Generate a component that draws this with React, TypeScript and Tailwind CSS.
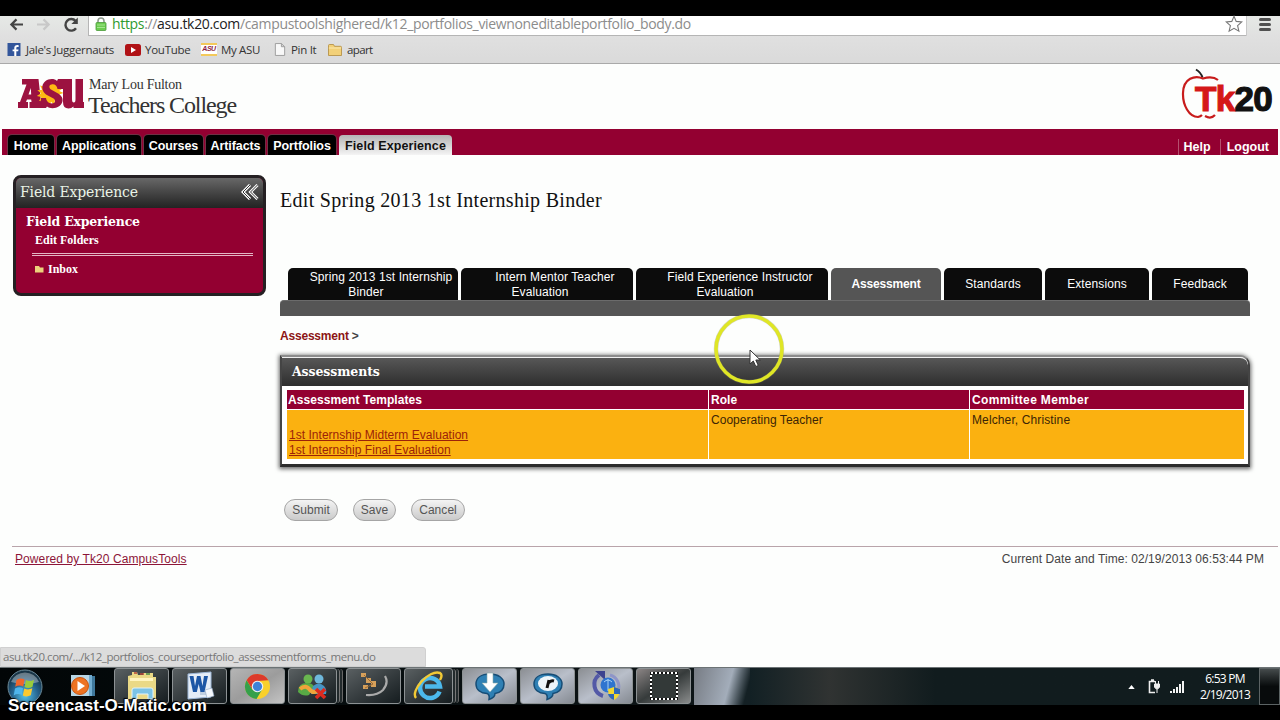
import React from 'react';

const SANS = "font-['Liberation_Sans',Arial,sans-serif]";
const UI = "font-['Open_Sans','Noto_Sans',sans-serif]";

function BackIcon({ className }: { className: string }) {
  return (
    <svg viewBox="0 0 16 14" className={className} fill="none" stroke="currentColor" strokeWidth="2.4">
      <path d="M15 7H3M8 1.5 2.5 7 8 12.5" />
    </svg>
  );
}

function Toolbar() {
  return (
    <div className="flex h-5 items-stretch bg-linear-to-b from-[#e6e9e6] to-[#e0e0e0]">
      <div className="flex w-[88px] items-center pb-[3px] pl-[9px]">
        <BackIcon className="h-[13px] w-[15px] text-[#444]" />
        <BackIcon className="ml-3 h-[13px] w-[15px] -scale-x-100 text-[#c8c8c8]" />
        <svg viewBox="0 0 16 16" className="ml-[12px] h-[16px] w-[16px]" fill="none" stroke="#444" strokeWidth="2.4">
          <path d="M13 11.2A5.8 5.8 0 1 1 12.6 4" />
          <path d="M14.8.6V7H8.4z" fill="#444" stroke="none" />
        </svg>
      </div>
      <div className="flex flex-1 items-center border-b border-l border-[#b5b5b5] bg-white pb-[3px] pl-[6px]">
        <svg viewBox="0 0 12 14" className="h-[14px] w-[12px]">
          <path d="M3 7V4a3 3 0 0 1 6 0v3" fill="none" stroke="#8f9a8f" strokeWidth="1.6" />
          <rect x="1" y="5.5" width="10" height="8" rx="1" fill="#6ccc50" stroke="#4a9a3a" strokeWidth=".8" />
          <path d="M2 8h8M2 10.5h8" stroke="#b4ecA0" strokeWidth=".8" />
        </svg>
        <span className="ml-[5px] text-[14px] leading-5 tracking-[-0.335px] whitespace-nowrap text-[#8c8c8c]">
          <span className="text-[#2e9a2e]">https</span>://<span className="text-[#222]">asu.tk20.com</span>
          /campustoolshighered/k12_portfolios_viewnoneditableportfolio_body.do
        </span>
        <svg viewBox="0 0 18 18" className="mr-[3px] ml-auto h-[18px] w-[18px]" fill="#fff" stroke="#777" strokeWidth="1.1">
          <path d="m9 1.3 2.2 5.1 5.6.5-4.2 3.7 1.3 5.6L9 13.3l-4.9 2.9 1.3-5.6L1.200 6.900l5.600-.5z" />
        </svg>
      </div>
      <div className="flex w-[34px] flex-col gap-[2px] border-l border-[#c8c8c8] pt-[2px] pl-[12px]">
        <div className="h-[3px] w-3 rounded-sm bg-[#505050]" />
        <div className="h-[3px] w-3 rounded-sm bg-[#505050]" />
        <div className="h-[3px] w-3 rounded-sm bg-[#505050]" />
      </div>
    </div>
  );
}

function Bookmarks() {
  return (
    <div className="flex h-7 items-center border-b border-[#a9a9a9] bg-linear-to-b from-[#e0e0e0] to-[#dadada] pl-[7px] text-[11.5px] whitespace-nowrap text-[#333]">
      <svg viewBox="0 0 14 14" className="h-[13px] w-[14px]">
        <rect width="14" height="14" fill="#33569b" />
        <path d="M9.500 14V9h2l.4-2H9.500V5.500c0-.8.3-1.200 1.300-1.200H12V2.300C9 1.800 7.300 3 7.300 5.200V7H5.500v2h1.800v5z" fill="#fff" />
      </svg>
      <span className="ml-[5px] w-[90px] tracking-[-0.32px]">Jale's Juggernauts</span>
      <svg viewBox="0 0 16 12" className="ml-[9px] h-[12px] w-[16px]">
        <rect width="16" height="12" rx="2.500" fill="#b01216" />
        <path d="M6 3v6l5-3z" fill="#fff" />
      </svg>
      <span className="ml-[4px] w-[46px] tracking-[-0.25px]">YouTube</span>
      <span className={`ml-[10px] flex h-[13px] w-4 items-center justify-center border-y-2 border-[#f3c95b] bg-white text-[7px] font-bold tracking-[-0.5px] text-[#8c1d40] italic ${SANS}`}>ASU</span>
      <span className="ml-[4px] w-[40px] tracking-[-0.35px]">My ASU</span>
      <svg viewBox="0 0 12 14" className="ml-[13px] h-[13px] w-[12px]" fill="#f8f8f8" stroke="#999">
        <path d="M1 .6h6.500L11 4v9.400H1zM7.500.6V4H11" />
      </svg>
      <span className="ml-[5px] w-[26px] tracking-[-0.3px]">Pin It</span>
      <svg viewBox="0 0 14 12" className="ml-[11px] h-[12px] w-[14px]" fill="#f2d078" stroke="#b08a3c" strokeWidth=".8">
        <path d="M.500 11.500v-10q0-1 1-1h4l1 1.800h6q1 0 1 1v8.200z" />
        <path d="M.8 4h12.400" stroke="#fff0bb" />
      </svg>
      <span className="ml-[5px] tracking-[-0.6px]">apart</span>
    </div>
  );
}

function Brand() {
  return (
    <div className="flex h-[65px] justify-between pr-[7px] pl-[17px]">
      <div className="flex">
        <svg viewBox="0 0 70 32" className="mt-[14px] h-[32px] w-[70px]">
          <path
            fill="#9c1240"
            fillRule="evenodd"
            d="M5 1H21.500L24 24H25V30H12.500V24H14.500L14.200 21.500H10L9 24H11V30H1V24H3L9.500 6.500H5zM13.800 10 11.500 16.500H14.200z"
          />
          <path d="m33 1 1.800 4 4-2.700-.3 4.500 4.600-1.400-2 4.200 4.700.3-3.600 3 4.300 2-4.500 1.600 3.200 3.400-4.800-.2 1.700 4.500-4.300-2-.2 4.700-3.500-3.200-2 4.300-1.800-4.300-3.800 2.900.1-4.700-4.600 1.200 2.400-4.200-4.600-1 4.200-2.600-3.700-3 4.800-.5-2-4.400 4.600 1.300-.1-4.700 4 2.700z" fill="#fdb913" />
          <path d="M46 1V11H40.500C40 7.500 37.500 5.800 34.500 6.500 31.500 7.200 32 10 34 11.500L42 16C47 19.500 46.500 25 42.500 28 38 31 32.500 30.500 30 28.500L29 30H24V20H29C29.500 24 33 26 36 25.300 39 24.500 38.500 21.800 36.500 20.500L29 16.500C24.500 13 24 7 28 3.500 32 .3 37.500.5 40 3L41 1z" fill="#9c1240" />
          <path d="M45 1H55V21q0 3.500 1.800 3.500t1.700-3.500V1H66V24h1v6H56.500v-1.500Q54.500 30.500 51.500 30.500 46 30.500 46 24V6H45z" fill="#9c1240" />
        </svg>
        <div className="mt-[13px] ml-[1px] font-['Liberation_Serif','Times_New_Roman',serif] whitespace-nowrap text-[#333]">
          <div className="h-[15px] pl-[1px] text-[14px] leading-[15px] tracking-[-0.25px]">Mary Lou Fulton</div>
          <div className="pt-[2px] text-[24px] leading-[22px] tracking-[-1.1px]">Teachers College</div>
        </div>
      </div>
      <div className="relative mt-[4px] h-[52px] w-[92px]">
        <svg viewBox="0 0 92 52" className="absolute inset-0 h-[52px] w-[92px]" fill="none">
          <path d="M15 1.500q5 3 6.500 8" stroke="#222" strokeWidth="2" />
          <path d="M37 12C32 8 27 9 22 10.500 14 7 2.500 10 2 25 1.600 37 8 49 17 49q2.500-.5 4-2M24 48q6 3.500 10-1" stroke="#c81c1c" strokeWidth="2.200" />
        </svg>
        <div className="absolute top-[14px] left-[14px] font-['Liberation_Sans',Arial,sans-serif] text-[35px] leading-[34px] font-bold whitespace-nowrap">
          <div className="origin-left scale-x-[1] tracking-[-0.7px] text-[#111] [-webkit-text-stroke:1.2px_currentColor]">
            <span className="text-[#d51818]">Tk</span>20
          </div>
        </div>
      </div>
    </div>
  );
}

const navTabs = [
  { label: 'Home', cls: 'w-[46px]' },
  { label: 'Applications', cls: 'w-[84px]' },
  { label: 'Courses', cls: 'w-[59px]' },
  { label: 'Artifacts', cls: 'w-[59px]' },
  { label: 'Portfolios', cls: 'w-[68px]' },
];

function Nav() {
  return (
    <div className="mx-[2px] flex h-[26px] items-end gap-[3px] overflow-hidden bg-[#930031] pl-[6px] text-[12.5px] font-bold whitespace-nowrap text-white">
      {navTabs.map((t) => (
        <div key={t.label} className={`flex h-5 items-center justify-center rounded-t-[4px] bg-black pt-[2px] tracking-[-0.08px] ring-1 ring-[#6f3044] ${t.cls}`}>
          {t.label}
        </div>
      ))}
      <div className="flex h-5 w-[113px] items-center justify-center rounded-t-[4px] bg-linear-to-b from-[#b5b5b5] to-[#f4f4f4] pt-[2px] tracking-[0.1px] text-[#111]">
        Field Experience
      </div>
      <div className="mr-[9px] ml-auto flex h-4 items-center text-[12.5px]">
        <span className="h-4 border-l border-[#b5506f] pl-[5px] leading-[17px]">Help</span>
        <span className="ml-[9px] h-4 border-l border-[#b5506f] pl-[6px] leading-[17px]">Logout</span>
      </div>
    </div>
  );
}

function Sidebar() {
  return (
    <div className="mt-[20px] ml-[13px] h-[121px] w-[253px] shrink-0 overflow-hidden rounded-[8px] border-[3px] border-[#252023] bg-[#930031] text-white">
      <div className="flex h-[30px] items-center justify-between bg-linear-to-b from-[#686868] to-[#232323] pr-[4px] pl-[4px] pb-[2px]">
        <span className="font-['DejaVu_Serif',serif] text-[14px] tracking-[-0.15px] text-[#e9f3e6]">Field Experience</span>
        <svg viewBox="0 0 18 16" className="h-[16px] w-[18px]" fill="none">
          <path d="M9 1 2 8l7 7M16.500 1l-7 7 7 7" stroke="#fff" strokeWidth="3" />
          <path d="M9 1 2 8l7 7M16.500 1l-7 7 7 7" stroke="#333" strokeWidth="1" />
        </svg>
      </div>
      <div className="font-['Liberation_Serif',serif] font-bold">
        <div className="pt-[5px] pl-[10px] font-['DejaVu_Serif',serif] text-[12.5px] leading-[18px] tracking-[-0.2px]">Field Experience</div>
        <div className="pl-[19px] text-[12px] leading-[18px]">Edit Folders</div>
        <div className="mt-[4px] mr-[10px] ml-[16px] h-[3px] border-y border-[#e3b5c4]" />
        <div className="mt-[4px] flex items-center pl-[19px] text-[12px] leading-[18px]">
          <svg viewBox="0 0 9 8" className="mr-[4px] h-[8px] w-[9px]"><path d="M0 7.500V1h4l1 1.500h3.500v5z" fill="#ecd27c" /></svg>
          Inbox
        </div>
      </div>
    </div>
  );
}

const longTabs = [
  { first: 'Spring 2013 1st Internship', second: 'Binder', cls: 'w-[170px]' },
  { first: 'Intern Mentor Teacher', second: 'Evaluation', cls: 'w-[172px]' },
  { first: 'Field Experience Instructor', second: 'Evaluation', cls: 'w-[192px]' },
];
const shortTabs = [
  { label: 'Assessment', cls: 'w-[110px] bg-[#555] font-bold tracking-[-0.15px]' },
  { label: 'Standards', cls: 'w-[98px] bg-[#0c0c0c]' },
  { label: 'Extensions', cls: 'w-[104px] bg-[#0c0c0c]' },
  { label: 'Feedback', cls: 'w-[96px] bg-[#0c0c0c]' },
];

function Tabs() {
  return (
    <div>
      <div className="flex h-8 gap-[3px] pl-2 text-center text-[12px] leading-[15px] tracking-[0.1px] whitespace-nowrap text-white">
        {longTabs.map((t) => (
          <div key={t.first} className={`rounded-t-[5px] bg-[#0c0c0c] pt-[2px] pr-[14px] ${t.cls}`}>
            <div className="flex justify-center pl-[30px]">{t.first}</div>
            <div>{t.second}</div>
          </div>
        ))}
        {shortTabs.map((t) => (
          <div key={t.label} className={`flex items-center justify-center rounded-t-[5px] ${t.cls}`}>{t.label}</div>
        ))}
      </div>
      <div className="h-4 rounded-t-[4px] border-t border-[#6b6b6b] bg-[#555]" />
    </div>
  );
}

function Assessments() {
  return (
    <div className="mt-[10px] h-[112px] rounded-tr-[10px] border-2 border-b-[3px] border-[#8c8c8c] border-r-[#444] border-b-[#2c2c2c] border-l-[#444] bg-white shadow-[0_1px_4px_1px_rgba(0,0,0,0.6)]">
      <div className="h-[29px] rounded-tr-[8px] border-t border-[#eee] bg-linear-to-b from-[#575757] to-[#2e2e2e] pl-[10px] font-['DejaVu_Serif',serif] text-[12.5px] leading-[28px] font-bold text-white">
        <span className="tracking-[-0.1px]">Assessments</span>
      </div>
      <div className="mx-[4px] mt-[4px] ml-[5px] grid grid-cols-[421px_260px_1fr] gap-x-px gap-y-px text-[12px] leading-[15px] tracking-[0.03px]">
        <div className="h-[19px] bg-[#930031] pt-[3px] pl-[1px] font-bold tracking-[0.08px] text-white">Assessment Templates</div>
        <div className="bg-[#930031] pt-[3px] pl-[2px] font-bold text-white">Role</div>
        <div className="bg-[#930031] pt-[3px] pl-[2px] font-bold tracking-[0.35px] text-white">Committee Member</div>
        <div className="flex h-[49px] flex-col bg-[#fbb110] pt-[18px] pl-[2px] text-[#9c2208] underline">
          <span>1st Internship Midterm Evaluation</span>
          <span>1st Internship Final Evaluation</span>
        </div>
        <div className="bg-[#fbb110] pt-[3px] pl-[2px] text-[#3c2505]">Cooperating Teacher</div>
        <div className="bg-[#fbb110] pt-[3px] pl-[2px] tracking-[0.12px] text-[#3c2505]">Melcher, Christine</div>
      </div>
    </div>
  );
}

const buttons = [
  { label: 'Submit', cls: 'w-[54px]' },
  { label: 'Save', cls: 'ml-[15px] w-[43px]' },
  { label: 'Cancel', cls: 'ml-[15px] w-[54px]' },
];

function Content() {
  return (
    <div className="ml-[14px] w-[970px]">
      <h1 className="mt-[32px] h-[26px] font-['Liberation_Serif',Georgia,serif] text-[20px] leading-[26px] tracking-[0.3px] text-[#111]">
        Edit Spring 2013 1st Internship Binder
      </h1>
      <div className="mt-[55px]"><Tabs /></div>
      <div className="mt-[11px] text-[12px] leading-[18px] font-bold tracking-[-0.2px] text-[#8c1515]">
        Assessment <span className="text-[#444]">&gt;</span>
      </div>
      <Assessments />
      <div className="mt-[32px] flex pl-[4px] text-[12px] text-[#555]">
        {buttons.map((b) => (
          <button key={b.label} className={`h-[22px] rounded-full border border-[#a5a5a5] bg-linear-to-b from-[#f4f4f4] to-[#cacaca] pb-px leading-[18px] tracking-[0.05px] ${b.cls}`}>{b.label}</button>
        ))}
      </div>
    </div>
  );
}

function TaskButton({ children, stacked, tone }: { children: React.ReactNode; stacked?: boolean; tone: string }) {
  return (
    <div className="flex h-[36px] w-[58px] shrink-0">
      <div className={`flex h-[36px] items-center justify-center rounded-[3px] border border-[#8d9294] ${stacked ? 'w-[49px]' : 'w-[55px]'} ${tone}`}>{children}</div>
      {stacked && <div className="my-px w-[3px] rounded-r-[3px] border-r border-[#777] bg-[#222a2c]" />}
      {stacked && <div className="my-px w-[3px] rounded-r-[3px] border-r border-[#666] bg-[#222a2c]" />}
    </div>
  );
}

const DARK = 'bg-linear-to-br from-[#5a6062] to-[#161d20]';
const LIGHT = 'bg-linear-to-br from-[#8c8f94] via-[#b9bfca] to-[#868b93]';

function Taskbar() {
  return (
    <div className="flex h-[38px] border-t border-[#6c7375] bg-linear-to-r from-[#020607] via-[#0d1416] to-[#18252a]">
      <div className="flex w-[114px] items-start">
        <svg viewBox="0 0 36 36" className="mt-px ml-[7px] h-[36px] w-[36px]">
          <defs>
            <radialGradient id="orb" cx="50%" cy="75%" r="65%">
              <stop offset="0" stopColor="#55c4ea" /><stop offset=".6" stopColor="#24618c" /><stop offset="1" stopColor="#183446" />
            </radialGradient>
          </defs>
          <circle cx="18" cy="18" r="17" fill="url(#orb)" stroke="#6c8a98" />
          <path d="M4 13a15 15 0 0 1 28 0q-14 4-28 0z" fill="#fff" opacity=".35" />
          <path d="M9.500 11q4-2.500 8-.5l-1.300 7q-4-2-8 .3z" fill="#f0652b" />
          <path d="M19 11q4 2 8-.3l-1.500 7q-4 2.300-8 .3z" fill="#9acb3b" />
          <path d="M8 19.500q4-2.300 8-.3l-1.300 6.800q-4-2-8 .4z" fill="#4fb5ec" />
          <path d="M17.300 19.500q4 2 8-.2l-1.500 7q-4 2.200-8 .2z" fill="#fcc92f" />
        </svg>
        <svg viewBox="0 0 26 24" className="mt-[6px] ml-[27px] h-[24px] w-[26px]">
          <rect x="8" y="2" width="17" height="20" fill="#3f789c" /><rect x="5" y="1" width="17" height="21" fill="#72acd0" />
          <rect x="1" y="1" width="18" height="21" fill="#b8d6e5" />
          <circle cx="10" cy="12" r="8.500" fill="#ee7322" stroke="#c65410" /><path d="M7.500 7v10l7.500-5z" fill="#fff" />
        </svg>
      </div>
      <TaskButton tone={DARK}>
        <svg viewBox="0 0 34 30" className="h-[30px] w-[34px]">
          <path d="M3 28V5l4-1V1h5l1 3h5V2h10v4h3v22z" fill="#ead986" />
          <path d="M5 7h23v3H5z" fill="#fff5bf" /><path d="M9 2h3M15 3h4" stroke="#b54538" strokeWidth="1.500" /><path d="M21 3h4" stroke="#468a45" strokeWidth="1.500" />
          <path d="M7 28v-9q0-2 2-2h17q2 0 2 2v9h-5v-5H12v5z" fill="#7cc3e6" stroke="#e0f3fc" />
        </svg>
      </TaskButton>
      <TaskButton tone={DARK}>
        <svg viewBox="0 0 30 30" className="h-[30px] w-[30px]">
          <path d="M3 3 26 1v25L3 28z" fill="#e5edf7" stroke="#9eb8d8" />
          <path d="M15 21h9M15 23h9" stroke="#9cb0c8" />
          <path d="M4.500 5h4l1.500 10 2-10h3.500l2 10 1.500-10H23l-3.500 16h-4l-1.800-8-1.900 8H8z" fill="#1c56a5" />
          <path d="m20 19 7-2 2 8-7 2z" fill="#f5f8fc" stroke="#8fa6c2" strokeWidth=".6" />
        </svg>
      </TaskButton>
      <TaskButton tone="bg-linear-to-br from-[#b5b5b5] via-[#9c9c9c] to-[#c4c4c4]">
        <svg viewBox="0 0 28 28" className="h-[27px] w-[27px]">
          <circle cx="14" cy="14" r="13" fill="#f9d02c" />
          <path d="M2.700 7.500A13 13 0 0 1 25.300 7.500L14 8.200 8.500 17z" fill="#dc3a2c" />
          <path d="M2.700 7.500A13 13 0 0 0 13 27l5.500-9.500-10-.5z" fill="#35a04a" />
          <circle cx="14" cy="14" r="6" fill="#f0f0f0" /><circle cx="14" cy="14" r="4.800" fill="#3f82d8" />
        </svg>
      </TaskButton>
      <TaskButton tone={DARK} stacked>
        <svg viewBox="0 0 32 28" className="h-[28px] w-[32px]">
          <circle cx="11" cy="7" r="4.500" fill="#69b74f" /><circle cx="22" cy="7" r="4.500" fill="#6fb8dc" />
          <path d="M1 20q0-9 9-9 6 0 7 4l-5 8q-6 2-11-3z" fill="#58aa45" /><path d="M16 14q6-5 11 0 3 3 2 8H14z" fill="#4794c4" />
          <path d="M3 17q6-5 10 1 4 4 9 0" fill="none" stroke="#f0a43a" strokeWidth="4" />
          <path d="m19 17 9 9m0-9-9 9" stroke="#dc2b20" strokeWidth="3.600" />
        </svg>
      </TaskButton>
      <TaskButton tone={DARK}>
        <svg viewBox="0 0 28 28" className="h-[28px] w-[28px]">
          <path d="M25 4q4 7-2 14-6 6-17 5" fill="none" stroke="#aaa" strokeWidth="2.200" />
          <path d="M1 1h5v4H1zM6 6h5v5H6zM3 13h5v4H3zM11 9h5v6h-5z" fill="#d6a05a" /><path d="m4 3 9 9-8 4" fill="none" stroke="#9a6a36" />
        </svg>
      </TaskButton>
      <TaskButton tone={DARK} stacked>
        <svg viewBox="0 0 32 30" className="h-[30px] w-[32px]">
          <path d="M26.500 20.500A10 10 0 1 1 27 15.500H12" fill="none" stroke="#4cb9ec" strokeWidth="4.500" />
          <path d="M3 27C-3 20 16-2 27 2q3 2 0 7" fill="none" stroke="#f1c936" strokeWidth="2.400" />
        </svg>
      </TaskButton>
      <TaskButton tone={LIGHT}>
        <svg viewBox="0 0 32 30" className="h-[30px] w-[32px]">
          <path d="M16 3C7 3 2 7 2 13s5 9 11 9.500q3 1 2 6 6-2 6-6c6-1 9-4 9-9.500C30 7 24 3 16 3z" fill="#2f80b4" stroke="#174d76" strokeWidth="1.500" />
          <path d="M13 2h6v10h5l-8 9-8-9h5z" fill="#fff" stroke="#8aa" strokeWidth=".6" />
        </svg>
      </TaskButton>
      <TaskButton tone={LIGHT}>
        <svg viewBox="0 0 32 30" className="h-[30px] w-[32px]">
          <path d="M16 3C7 3 2 7 2 13s5 9 11 9.500q3 1 2 6 6-2 6-6c6-1 9-4 9-9.500C30 7 24 3 16 3z" fill="#2f80b4" stroke="#174d76" strokeWidth="1.500" />
          <ellipse cx="16" cy="12.500" rx="10" ry="7.500" fill="#eef5fa" /><path d="m15 17 2-8m-.5 3q2-3 5.500-2" fill="none" stroke="#111" strokeWidth="3" />
        </svg>
      </TaskButton>
      <TaskButton tone={LIGHT}>
        <svg viewBox="0 0 32 32" className="h-[32px] w-[32px]">
          <path d="M13 26A12 12 0 0 1 9 5" fill="none" stroke="#5359a6" strokeWidth="4" /><path d="M5 1h10v9z" fill="#3c428f" />
          <path d="M20 5a12 12 0 0 1 8 16" fill="none" stroke="#8f95c8" strokeWidth="3" />
          <circle cx="18" cy="15" r="7.500" fill="#2f74cf" /><path d="M14 12q4-4 8 0M18 9v12" stroke="#a5d0f5" fill="none" />
          <path d="m24 17 6 2q0 8-6 11-6-3-6-11z" fill="#f2d834" /><path d="m24 17 6 2v5h-6zM24 24v6q-5-2-6-6z" fill="#2f68b8" />
        </svg>
      </TaskButton>
      <TaskButton tone="bg-linear-to-br from-[#8b8585] via-[#363b3b] to-[#8a8c8c]">
        <svg viewBox="0 0 28 28" className="h-[28px] w-[28px]">
          <rect x="1" y="1" width="26" height="26" fill="#333938" stroke="#111" strokeWidth="2" />
          <rect x="1" y="1" width="26" height="26" fill="none" stroke="#fff" strokeWidth="2" strokeDasharray="2 2" />
        </svg>
      </TaskButton>
      <div className="h-[37px] w-[56px] shrink-0 bg-linear-105 from-[#777c84] via-[#a3adba] via-60% to-[#142024] to-90%" />
      <div className="flex flex-1 items-center bg-linear-to-r from-[#122024] via-[#303332] via-15% to-[#111c1e] to-35% pl-[378px]">
        <svg viewBox="0 0 8 5" className="h-[4px] w-[7px]"><path d="m4 0 4 5H0z" fill="#fff" /></svg>
        <svg viewBox="0 0 12 15" className="ml-[13px] h-[15px] w-[12px]" fill="none" stroke="#eee">
          <path d="M7 13.500H1.500v-11H7M3 1h3" strokeWidth="1.600" /><path d="M6.500 5h5v3q-1 2-2.500 2t-2.500-2zM7.500 2v3m3-3v3M9 10v4" fill="#eee" />
        </svg>
        <svg viewBox="0 0 14 12" className="ml-[10px] h-[12px] w-[14px]" fill="#f3f3f3">
          <path d="M0 10h2v2H0zM3 8h2v4H3zM6 6h2v6H6zM9 3h2v9H9zM12 0h2v12h-2z" />
        </svg>
        <div className="ml-[13px] w-[56px] text-center text-[12px] leading-[16px] tracking-[-0.75px] whitespace-nowrap text-white">
          <div>6:53 PM</div>
          <div>2/19/2013</div>
        </div>
        <div className="ml-auto h-[37px] w-[21px] border border-[#5c6364] bg-linear-to-b from-[#454b4c] to-[#080b0c] to-50%" />
      </div>
    </div>
  );
}

export default function App() {
  return (
    <div className={`relative flex h-[720px] w-[1280px] flex-col overflow-hidden bg-black ${SANS}`}>
      <div className="h-4 shrink-0" />
      <div className={UI}><Toolbar /><Bookmarks /></div>
      <div className="flex h-[603px] shrink-0 flex-col bg-[#fdfefd]">
        <Brand />
        <Nav />
        <div className="flex h-[391px]"><Sidebar /><Content /></div>
        <div className="mr-[2px] ml-[12px] flex justify-between border-t border-[#b9a4aa] pt-[4px] pr-[14px] pl-[3px] text-[12px] leading-4 whitespace-nowrap">
          <a className="tracking-[0.09px] text-[#8c1538] underline">Powered by Tk20 CampusTools</a>
          <span className="tracking-[0.06px] text-[#444]">Current Date and Time: 02/19/2013 06:53:44 PM</span>
        </div>
        <div className={`mt-auto h-[20px] w-[426px] rounded-tr-[3px] border border-[#d0d0d0] bg-[#dcdcdc] pl-[2px] text-[11.5px] leading-[18px] tracking-[-0.46px] whitespace-nowrap text-[#777] ${UI}`}>
          asu.tk20.com/.../k12_portfolios_courseportfolio_assessmentforms_menu.do
        </div>
      </div>
      <div className={UI}><Taskbar /></div>
      <div className="absolute top-[696px] left-[8px] text-[17px] leading-5 font-bold tracking-[0.02px] whitespace-nowrap text-white [text-shadow:1px_1px_1px_#000,-1px_-1px_1px_#000]">
        Screencast-O-Matic.com
      </div>
      <svg viewBox="0 0 72 72" className="absolute top-[313px] left-[713px] h-[72px] w-[72px]">
        <circle cx="36" cy="36" r="33" fill="none" stroke="#8a8a60" strokeWidth="4.500" opacity=".35" />
        <circle cx="36" cy="36" r="33" fill="none" stroke="#dfe625" strokeWidth="3.500" />
        <path d="M37 37v14l3.300-3 2.500 5.500 2.500-1-2.500-5.500h4.500z" fill="#fff" stroke="#333" />
      </svg>
    </div>
  );
}
